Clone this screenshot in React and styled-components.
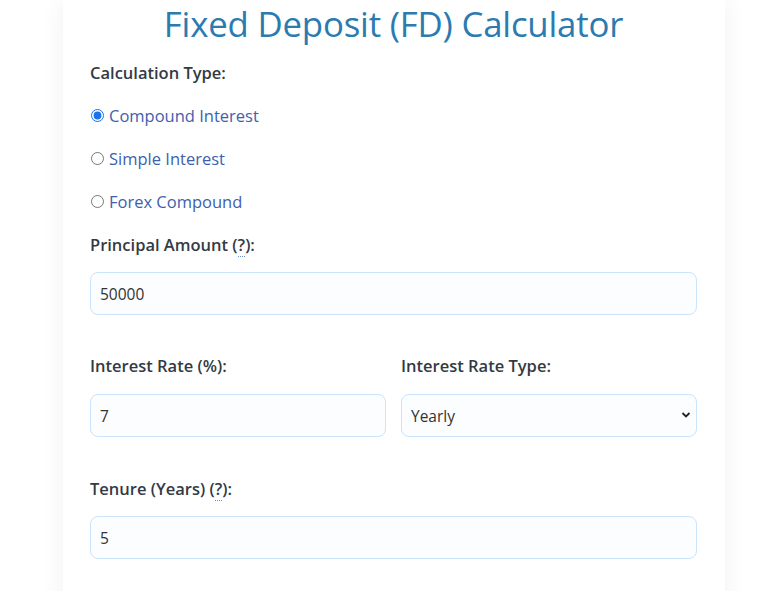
import React, { useState } from "react";
import styled, { createGlobalStyle } from "styled-components";

const Global = createGlobalStyle`
  html, body { margin: 0; padding: 0; background: #ffffff; }
  body { font-family: "Open Sans", "Noto Sans", sans-serif; color: #333; }
  * { box-sizing: border-box; }
`;

const Page = styled.div`
  display: flex;
  justify-content: flex-start;
  padding-left: 63px;
  width: 768px;
  height: 591px;
  overflow: hidden;
`;

const Card = styled.div`
  width: 662px;
  background: #fff;
  box-shadow: 0 0 24px rgba(0, 0, 0, 0.06);
  padding: 0 28px 40px 27px;
  min-height: 640px;
`;

const Title = styled.h1`
  margin: 0 0 14px 0;
  font-size: 34.8px;
  line-height: 47px;
  font-weight: 400;
  text-align: center;
  color: #2b7bb0;
  letter-spacing: -0.2px;
`;

const Label = styled.div`
  font-size: 16.5px;
  font-weight: 600;
  line-height: 24px;
  color: #333a44;
  margin-bottom: ${(p) => p.$mb || 15}px;
`;

const Abbr = styled.span`
  border-bottom: 1px dotted #6a8fc0;
`;

const RadioGroup = styled.div`
  display: flex;
  flex-direction: column;
  gap: 19px;
  margin-bottom: 20px;
`;

const RadioRow = styled.label`
  display: flex;
  align-items: center;
  height: 24px;
  font-size: 16.5px;
  color: #3e60ad;
  cursor: pointer;
`;

const Radio = styled.input`
  width: 13px;
  height: 13px;
  margin: 0 5px 0 1px;
  accent-color: #1a73e8;
`;

const Field = styled.div`
  margin-bottom: ${(p) => p.$mb ?? 39}px;
  flex: 1;
`;

const Row = styled.div`
  display: flex;
  gap: 15px;
  margin-bottom: 40px;
`;

const Input = styled.input`
  display: block;
  width: 100%;
  height: 43px;
  border: 1px solid #cae4fb;
  border-radius: 8px;
  background: #fbfdff;
  padding: 0 9px;
  font-family: "Open Sans", "Noto Sans", sans-serif;
  font-size: 15.5px;
  color: #333;
  outline: none;
`;

const SelectWrap = styled.div`
  position: relative;
`;

const Select = styled.select`
  display: block;
  width: 100%;
  height: 43px;
  border: 1px solid #cae4fb;
  border-radius: 8px;
  background: #fbfdff;
  padding: 0 9px;
  font-family: "Open Sans", "Noto Sans", sans-serif;
  font-size: 15.5px;
  color: #333;
  appearance: none;
  outline: none;
`;

const Chevron = styled.svg`
  position: absolute;
  right: 6px;
  top: 17px;
  pointer-events: none;
`;

export default function App() {
  const [type, setType] = useState("compound");
  const options = [
    ["compound", "Compound Interest"],
    ["simple", "Simple Interest"],
    ["forex", "Forex Compound"],
  ];
  return (
    <>
      <Global />
      <Page>
        <Card>
          <Title>Fixed Deposit (FD) Calculator</Title>
          <Label $mb={18}>Calculation Type:</Label>
          <RadioGroup>
            {options.map(([v, t]) => (
              <RadioRow key={v}>
                <Radio
                  type="radio"
                  name="calc"
                  checked={type === v}
                  onChange={() => setType(v)}
                />
                {t}
              </RadioRow>
            ))}
          </RadioGroup>
          <Field>
            <Label>
              Principal Amount (<Abbr>?</Abbr>):
            </Label>
            <Input defaultValue="50000" />
          </Field>
          <Row>
            <Field $mb={0}>
              <Label $mb={16}>Interest Rate (%):</Label>
              <Input defaultValue="7" />
            </Field>
            <Field $mb={0}>
              <Label $mb={16}>Interest Rate Type:</Label>
              <SelectWrap>
                <Select defaultValue="yearly">
                  <option value="yearly">Yearly</option>
                  <option value="monthly">Monthly</option>
                </Select>
                <Chevron width="10" height="8" viewBox="0 0 10 8">
                  <path d="M1.5 2 L5 5.5 L8.5 2" fill="none" stroke="#222" strokeWidth="1.8" />
                </Chevron>
              </SelectWrap>
            </Field>
          </Row>
          <Field>
            <Label>
              Tenure (Years) (<Abbr>?</Abbr>):
            </Label>
            <Input defaultValue="5" />
          </Field>
        </Card>
      </Page>
    </>
  );
}
